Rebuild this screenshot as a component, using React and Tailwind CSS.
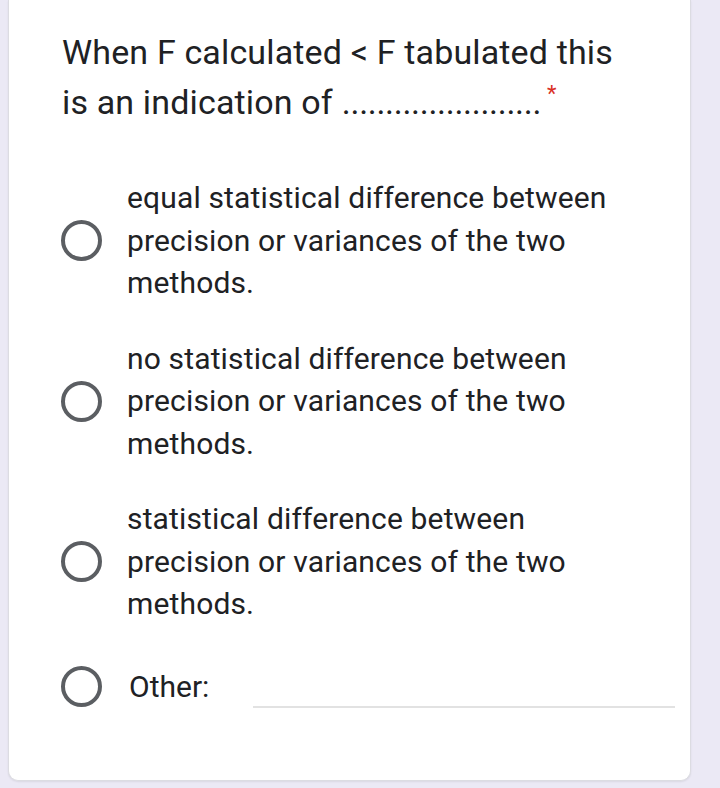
const options = [
  ["equal statistical difference between", "precision or variances of the two", "methods."],
  ["no statistical difference between", "precision or variances of the two", "methods."],
  ["statistical difference between", "precision or variances of the two", "methods."],
];

function Radio() {
  return <div className="w-[41px] h-[41px] shrink-0 rounded-full border-[4px] border-[#5b5e62]" />;
}

export default function App() {
  return (
    <div className="min-h-screen bg-[#ebe9f5] pl-2 pr-[29px] font-['Roboto',sans-serif]">
      <div className="h-[781px] bg-white rounded-b-[10px] border border-t-0 border-[#dcdce2] shadow-[0_1px_2px_rgba(0,0,0,0.08)] pt-[27px]">
        {/* Question title */}
        <div className="pl-[53px] text-[34px] leading-[50px] text-[#202124] tracking-[0.15px]">
          <div>When F calculated &lt; F tabulated this</div>
          <div className="flex items-start">
            <span>is an indication of</span>
            <span className="ml-[9px] tracking-[-0.3px]">.......................</span>
            <span className="ml-[6px] text-[22px] leading-[34px] text-[#d93025]">*</span>
          </div>
        </div>

        {/* Choices */}
        <div className="mt-[50px] pl-[52px] flex flex-col gap-[33px]">
          {options.map((lines, i) => (
            <div key={i} className="flex items-center">
              <Radio />
              <div className="ml-[25px] text-[30px] leading-[42.5px] text-[#202124] tracking-[0.15px]">
                {lines.map((l, j) => (
                  <div key={j}>{l}</div>
                ))}
              </div>
            </div>
          ))}
        </div>

        {/* Other */}
        <div className="mt-[40px] pl-[52px] pr-[15px] flex items-center h-[42px]">
          <Radio />
          <span className="ml-[27px] text-[30px] text-[#202124]">Other:</span>
          <div className="flex-1 ml-[44px] h-[42px] border-b-2 border-[#e2e2e2]" />
        </div>
      </div>
    </div>
  );
}
